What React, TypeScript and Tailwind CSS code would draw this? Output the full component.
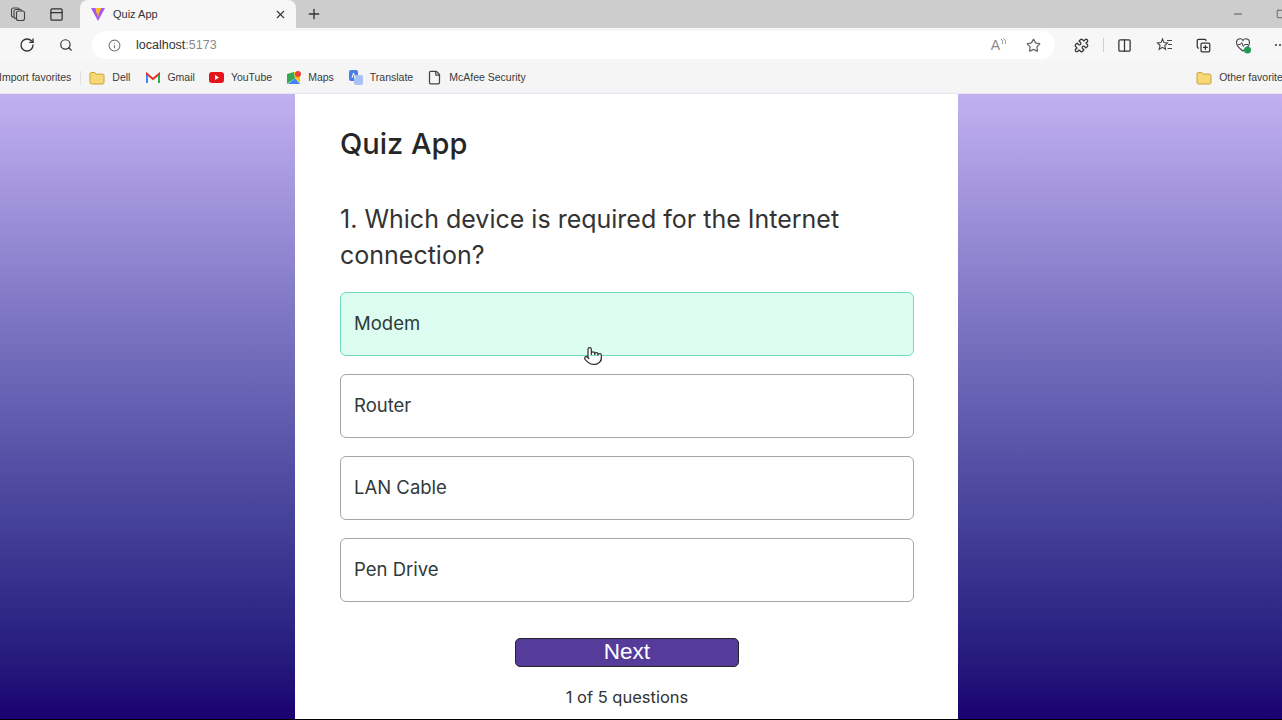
import { ReactNode } from "react";
import { RotateCw, Search, Info, X, Plus, Minus, Star, Puzzle, Columns2, File, Square, CopyPlus, PanelTop, Pointer } from "lucide-react";

const pageFont = "font-['Inter',sans-serif]";

function Folder() {
  return (
    <svg width="16" height="14" viewBox="0 0 16 14" className="shrink-0">
      <path d="M1 3a1.500 1.500 0 0 1 1.500-1.500h3.200l1.600 1.600h6.200A1.500 1.500 0 0 1 15 4.600V11.500A1.500 1.500 0 0 1 13.500 13h-11A1.500 1.500 0 0 1 1 11.500z" fill="#f8d775" stroke="#c9a23c" />
    </svg>
  );
}

function GmailIcon() {
  return (
    <svg width="14" height="12" viewBox="0 0 14 12" className="shrink-0">
      <path d="M1 11V2l6 5 6-5v9" fill="none" stroke="#d93025" strokeWidth="2" />
      <path d="M1 11V3" stroke="#4285f4" strokeWidth="2" />
      <path d="M13 11V3" stroke="#34a853" strokeWidth="2" />
    </svg>
  );
}

function YoutubeIcon() {
  return (
    <svg width="15" height="11" viewBox="0 0 15 11" className="shrink-0">
      <rect width="15" height="11" rx="3" fill="#e5141b" />
      <path d="M6 3l4 2.500L6 8z" fill="#fff" />
    </svg>
  );
}

function MapsIcon() {
  return (
    <svg width="14" height="14" viewBox="0 0 14 14" className="shrink-0">
      <path d="M0 3l7-2 1 6-8 6z" fill="#34a853" />
      <path d="M8 7l5 6H1z" fill="#4285f4" />
      <path d="M7 1l6 1v10L8 7z" fill="#fbbc04" />
      <circle cx="11" cy="3" r="3" fill="#ea4335" />
    </svg>
  );
}

function TranslateIcon() {
  return (
    <svg width="14" height="15" viewBox="0 0 14 15" className="shrink-0">
      <rect x="0" y="0" width="9" height="11" rx="2" fill="#4a7fe8" />
      <rect x="5" y="5" width="9" height="10" rx="2" fill="#a9c2f5" />
      <path d="M3 8l1.500-5L6 8" fill="none" stroke="#fff" />
    </svg>
  );
}

function WorkspacesIcon() {
  return (
    <svg width="16" height="16" viewBox="0 0 16 16" fill="none" stroke="#444" strokeWidth="1.100" className="shrink-0">
      <rect x="1.500" y="2" width="8" height="9" rx="2" />
      <rect x="4" y="3.500" width="8" height="9" rx="2" fill="#cdcdcd" />
      <rect x="6.500" y="5" width="8" height="9.500" rx="2" fill="#cdcdcd" />
    </svg>
  );
}

function FavoritesIcon() {
  return (
    <svg width="17" height="16" viewBox="0 0 17 16" fill="none" stroke="#444" strokeWidth="1.100" className="shrink-0">
      <path d="M6.500 2l1.500 3.600 3.500.4-2.700 2.500.8 3.800-3.100-2-3.300 2 .9-3.800L1.500 6l3.500-.4z" />
      <path d="M11 3.500h5M12 7.500h4M11.500 11.500h4.500" />
    </svg>
  );
}

function HealthIcon() {
  return (
    <svg width="17" height="17" viewBox="0 0 17 17" className="shrink-0">
      <path d="M8 14C3 10.500 1.500 8 1.500 5.500A3.500 3.500 0 0 1 8 3.500a3.500 3.500 0 0 1 6.500 2c0 2.500-1.500 5-6.500 8.500z" fill="none" stroke="#444" strokeWidth="1.100" />
      <path d="M3 7.500h2.500l1.200-2 1.600 4 1.200-2H13" fill="none" stroke="#444" />
      <circle cx="12.500" cy="13" r="3.500" fill="#1f9d55" />
    </svg>
  );
}

function ReadAloudIcon() {
  return (
    <span className="flex items-start text-[#8a8a8a]">
      <span className="text-[14px] leading-none">A</span>
      <svg width="6" height="8" viewBox="0 0 6 8" fill="none" stroke="#8a8a8a">
        <path d="M1 1c2 1 2 3 1 5M3 0c3 2 3 4 2 6" />
      </svg>
    </span>
  );
}

function ViteIcon() {
  return (
    <svg width="16" height="16" viewBox="0 0 16 16" className="shrink-0">
      <path d="M1 2h14L8 15z" fill="#a855f7" />
      <path d="M5.500 2h6L8.500 7.500l1-.2L7.500 12l.4-4.500-1.300.2z" fill="#fbbf24" />
    </svg>
  );
}

function Bookmark({ icon, label, className }: { icon: ReactNode; label: string; className?: string }) {
  return (
    <div className={`flex items-center gap-[7px] ${className ?? ""}`}>
      {icon}
      <span className="text-[10.500px] text-[#3a3a3a] whitespace-nowrap">{label}</span>
    </div>
  );
}

function Option({ label, selected }: { label: string; selected?: boolean }) {
  return (
    <div
      className={`h-[64px] flex items-center pl-[13px] rounded-[6px] border text-[18.500px] text-[#2f3a3a] ${
        selected ? "bg-[#dcfdf0] border-[#6fdcc0]" : "bg-white border-[#a6a6a6]"
      }`}
    >
      {label}
    </div>
  );
}

export default function App() {
  return (
    <div className="relative w-[1282px] h-[720px] overflow-hidden flex flex-col font-['Liberation_Sans',sans-serif] bg-white">
      {/* tab strip */}
      <div className="h-[28px] bg-[#cdcdcd] flex items-end shrink-0">
        <div className="w-[80px] h-[28px] flex items-center gap-[23px] pl-[10px] text-[#333]">
          <WorkspacesIcon />
          <PanelTop size={15} />
        </div>
        <div className="w-[216px] h-[28px] bg-[#f7f7f7] rounded-t-[8px] flex items-center pl-[10px] pr-[9px]">
          <ViteIcon />
          <span className="ml-[7px] text-[11px] text-[#333]">Quiz App</span>
          <X size={13} className="ml-auto text-[#333]" />
        </div>
        <div className="h-[28px] flex items-center pl-[10px] flex-1 text-[#333]">
          <Plus size={16} />
          <Minus size={12} className="ml-auto text-[#555]" />
          <Square size={10} className="ml-[32px] mr-[-4px] text-[#555]" />
        </div>
      </div>

      {/* toolbar */}
      <div className="h-[34px] bg-[#f7f7f7] flex items-center shrink-0 text-[#333] [&>*]:shrink-0">
        <RotateCw size={16} className="ml-[19px]" />
        <Search size={14} className="ml-[24px]" />
        <div className="ml-[19px] w-[963px] h-[28px] bg-white rounded-full flex items-center pl-[16px] pr-[14px]">
          <Info size={13} className="text-[#777]" />
          <span className="ml-[15px] text-[12.500px] text-[#333]">
            localhost<span className="text-[#8a8a8a]">:5173</span>
          </span>
          <span className="ml-auto">
            <ReadAloudIcon />
          </span>
          <Star size={15} className="ml-[20px] text-[#666]" />
        </div>
        <Puzzle size={15} className="ml-[19px]" />
        <div className="ml-[14px] w-px h-[14px] bg-[#d0d0d0]" />
        <Columns2 size={15} className="ml-[13px]" />
        <span className="ml-[24px]">
          <FavoritesIcon />
        </span>
        <CopyPlus size={15} className="ml-[23px]" />
        <span className="ml-[24px]">
          <HealthIcon />
        </span>
        <span className="ml-[23px] flex gap-[2px]">
          <span className="w-[2px] h-[2px] bg-[#333] rounded-full" />
          <span className="w-[2px] h-[2px] bg-[#333] rounded-full" />
          <span className="w-[2px] h-[2px] bg-[#333] rounded-full" />
        </span>
      </div>

      {/* bookmarks */}
      <div className="h-[31px] bg-[#f5f5f5] flex items-center shrink-0 overflow-hidden">
        <span className="ml-[-1px] text-[10.500px] text-[#3a3a3a] whitespace-nowrap">Import favorites</span>
        <div className="ml-[9px] w-px h-[14px] bg-[#e0e0e0]" />
        <Bookmark className="ml-[8px]" icon={<Folder />} label="Dell" />
        <Bookmark className="ml-[16px]" icon={<GmailIcon />} label="Gmail" />
        <Bookmark className="ml-[14px]" icon={<YoutubeIcon />} label="YouTube" />
        <Bookmark className="ml-[15px]" icon={<MapsIcon />} label="Maps" />
        <Bookmark className="ml-[15px]" icon={<TranslateIcon />} label="Translate" />
        <Bookmark className="ml-[14px]" icon={<File size={15} className="text-[#444]" />} label="McAfee Security" />
        <Bookmark className="ml-auto mr-[-6px]" icon={<Folder />} label="Other favorites" />
      </div>

      {/* page */}
      <div className="flex-1 min-h-0 border-t border-[#e8e4f4] pl-[295px] bg-gradient-to-b from-[#c2b0f1] to-[#1b0070]">
        <div className={`w-[663px] h-full bg-white pl-[45px] pr-[44px] ${pageFont}`}>
          <h1 className="pt-[30px] text-[29px] leading-[40px] font-medium text-[#262626]">Quiz App</h1>
          <h2 className="mt-[37px] text-[25px] leading-[36px] font-normal text-[#333]">1. Which device is required for the Internet connection?</h2>
          <div className="mt-[19px] flex flex-col gap-[18px]">
            <Option label="Modem" selected />
            <Option label="Router" />
            <Option label="LAN Cable" />
            <Option label="Pen Drive" />
          </div>
          <button className="mt-[36px] mx-auto block w-[224px] h-[29px] rounded-[5px] bg-[#553c9a] border border-[#262626] text-white text-[22.500px] leading-none font-['Liberation_Sans',sans-serif]">Next</button>
          <p className="mt-[18px] text-center text-[16.500px] text-[#333]">1 of 5 questions</p>
        </div>
      </div>
      <div className="h-px bg-black shrink-0" />

      {/* mouse cursor in the recording */}
      <Pointer size={20} strokeWidth={1.500} className="absolute left-[583px] top-[346px] text-[#333] fill-white" />
    </div>
  );
}
